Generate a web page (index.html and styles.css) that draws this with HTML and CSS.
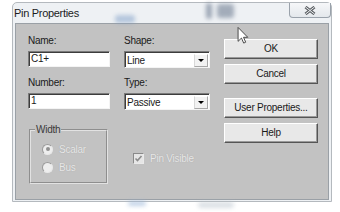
FILE: index.html
```html
<!DOCTYPE html>
<html>
<head>
<meta charset="utf-8">
<title>Pin Properties</title>
<link rel="stylesheet" href="styles.css">
</head>
<body>
<div class="window">
  <div class="titlebar">
    <div class="glass g1"></div>
    <div class="glass g2"></div>
    <div class="glass g3"></div>
    <span class="title">Pin Properties</span>
    <div class="close">
      <svg width="12" height="9" viewBox="0 0 12 9">
        <path d="M1.5 1 L10.5 8 M10.5 1 L1.5 8" stroke="#5e6266" stroke-width="3" fill="none"/>
        <path d="M1.5 1 L10.5 8 M10.5 1 L1.5 8" stroke="#eceef0" stroke-width="1" fill="none"/>
      </svg>
    </div>
  </div>
  <div class="client">
    <div class="form">
      <div class="fields">
        <div class="label">Name:</div>
        <div class="label">Shape:</div>
        <div class="edit">C1+</div>
        <div class="combo"><span class="value">Line</span><span class="drop"><span class="arrow"></span></span></div>
        <div class="label row2">Number:</div>
        <div class="label row2">Type:</div>
        <div class="edit">1</div>
        <div class="combo"><span class="value">Passive</span><span class="drop"><span class="arrow"></span></span></div>
      </div>
      <div class="lower">
        <fieldset class="group">
          <legend>Width</legend>
          <div class="radio"><span class="circle checked"></span><span class="disabled">Scalar</span></div>
          <div class="radio second"><span class="circle"></span><span class="disabled">Bus</span></div>
        </fieldset>
        <div class="check">
          <span class="box">
            <svg width="9" height="9" viewBox="0 0 9 9"><path d="M1.5 4.5 L3.5 6.5 L7.5 2" stroke="#8c8c8c" stroke-width="1.6" fill="none"/></svg>
          </span>
          <span class="disabled">Pin Visible</span>
        </div>
      </div>
    </div>
    <div class="buttons">
      <div class="btn">OK</div>
      <div class="btn gap-big">Cancel</div>
      <div class="btn">User Properties...</div>
      <div class="btn last">Help</div>
    </div>
  </div>
</div>
<div class="glass g4"></div>
<div class="glass g5"></div>
<svg class="cursor" width="12" height="17" viewBox="0 0 12 19">
  <path d="M0.5 0.5 L0.5 16 L4.3 12.4 L6.8 18 L9 17 L6.6 11.5 L11.3 11.5 Z" fill="#fff" stroke="#3a3a3a" stroke-width="1"/>
</svg>
</body>
</html>
```
FILE: styles.css
```css
html, body {
  margin: 0;
  padding: 0;
  background: #ffffff;
}
body {
  width: 340px;
  height: 212px;
  overflow: hidden;
  position: relative;
  font-family: "Liberation Sans", Arial, sans-serif;
  font-size: 10px;
  letter-spacing: -0.25px;
  color: #1a1a1a;
}
.window {
  margin: 2px 0 0 12px;
  width: 320px;
  height: 200px;
  box-sizing: border-box;
  border: 1px solid #b4b9be;
  border-radius: 5px 5px 0 0;
  background: #eef1f4;
  display: flex;
  flex-direction: column;
}
.titlebar {
  position: relative;
  height: 20px;
  flex: none;
  display: flex;
  justify-content: space-between;
  align-items: flex-start;
  padding-left: 1px;
}
.title {
  position: relative;
  font-size: 11px;
  letter-spacing: -0.3px;
  line-height: 20px;
  color: #1c1c1c;
}
.glass {
  position: absolute;
  filter: blur(2px);
  border-radius: 3px;
}
.g1 { left: 193px; top: 0; width: 6px; height: 16px; background: #5a6a82; opacity: .55; }
.g2 { left: 204px; top: 1px; width: 17px; height: 14px; background: #5a6a82; opacity: .5; }
.g3 { left: 102px; top: 12px; width: 20px; height: 8px; background: #7c9cc6; opacity: .5; }
.g4 { left: 128px; top: 201px; width: 18px; height: 5px; background: #9ab6d8; opacity: .6; }
.g5 { left: 198px; top: 202px; width: 36px; height: 6px; background: #b8c2cc; opacity: .5; }
.close {
  position: relative;
  width: 42px;
  height: 15px;
  box-sizing: border-box;
  border: 1px solid #9aa2ab;
  border-top: none;
  border-radius: 0 0 4px 4px;
  background: linear-gradient(#f6f7f9, #e4e8ec);
  display: flex;
  align-items: center;
  justify-content: center;
}
.client {
  flex: 1;
  margin: 0 2px 1px 2px;
  border: 1px solid #9aa0a6;
  background: #c2c2c2;
  display: flex;
  align-items: flex-start;
}
.form {
  padding: 11px 0 0 12px;
}
.fields {
  display: grid;
  grid-template-columns: 82px 86px;
  column-gap: 14px;
}
.label {
  line-height: 12px;
  height: 12px;
  margin-bottom: 4px;
}
.label.row2 {
  margin-top: 9px;
}
.edit {
  height: 16px;
  box-sizing: border-box;
  background: #fff;
  border: 1px solid;
  border-color: #7a7a7a #f4f4f4 #f4f4f4 #7a7a7a;
  box-shadow: inset 1px 1px 0 #3c3c3c;
  padding-left: 2px;
  line-height: 14px;
}
.combo {
  height: 17px;
  box-sizing: border-box;
  background: #fff;
  border: 1px solid;
  border-color: #7a7a7a #f4f4f4 #f4f4f4 #7a7a7a;
  box-shadow: inset 1px 1px 0 #3c3c3c;
  display: flex;
  align-items: center;
  justify-content: space-between;
  padding: 1px 1px 0 2px;
}
.combo .value {
  line-height: 13px;
}
.drop {
  width: 14px;
  height: 13px;
  box-sizing: border-box;
  background: #f2f2f2;
  border: 1px solid;
  border-color: #ffffff #a8a8a8 #a8a8a8 #d8d8d8;
  display: flex;
  align-items: center;
  justify-content: center;
}
.arrow {
  width: 0;
  height: 0;
  border-left: 3px solid transparent;
  border-right: 3px solid transparent;
  border-top: 3px solid #000;
}
.lower {
  display: flex;
  align-items: flex-start;
  margin-top: 14px;
}
.group {
  margin: 0 0 0 1px;
  width: 79px;
  height: 60px;
  box-sizing: border-box;
  border: 2px groove #e2e2e2;
  padding: 7px 0 0 4px;
}
.group legend {
  padding: 0 1px;
  line-height: 12px;
  color: #3a3a3a;
}
.radio {
  display: flex;
  align-items: center;
  height: 12px;
  margin-left: 7px;
}
.radio.second {
  margin-top: 6px;
}
.circle {
  width: 11px;
  height: 11px;
  box-sizing: border-box;
  border-radius: 50%;
  border: 1px solid #9a9a9a;
  border-right-color: #e8e8e8;
  border-bottom-color: #e8e8e8;
  background: #eeeeee;
  margin-right: 6px;
  display: flex;
  align-items: center;
  justify-content: center;
}
.circle.checked::after {
  content: "";
  width: 4px;
  height: 4px;
  border-radius: 50%;
  background: #909090;
}
.disabled {
  color: #e8e8e8;
  text-shadow: 0 0 1px #9c9c9c;
}
.check {
  display: flex;
  align-items: center;
  height: 12px;
  margin: 28px 0 0 25px;
}
.box {
  width: 11px;
  height: 11px;
  box-sizing: border-box;
  border: 1px solid;
  border-color: #8a8a8a #eaeaea #eaeaea #8a8a8a;
  background: #e6e6e6;
  margin-right: 6px;
  display: flex;
  align-items: center;
  justify-content: center;
}
.buttons {
  margin-left: 14px;
  padding-top: 15px;
  width: 94px;
  display: flex;
  flex-direction: column;
}
.btn {
  height: 20px;
  box-sizing: border-box;
  background: #e8e8e8;
  border: 1px solid;
  border-color: #ffffff #555555 #555555 #ffffff;
  box-shadow: inset -1px -1px 0 #9a9a9a;
  text-align: center;
  line-height: 18px;
  margin-bottom: 5px;
}
.btn.gap-big {
  margin-bottom: 14px;
}
.cursor {
  position: absolute;
  left: 237px;
  top: 27px;
}
```
